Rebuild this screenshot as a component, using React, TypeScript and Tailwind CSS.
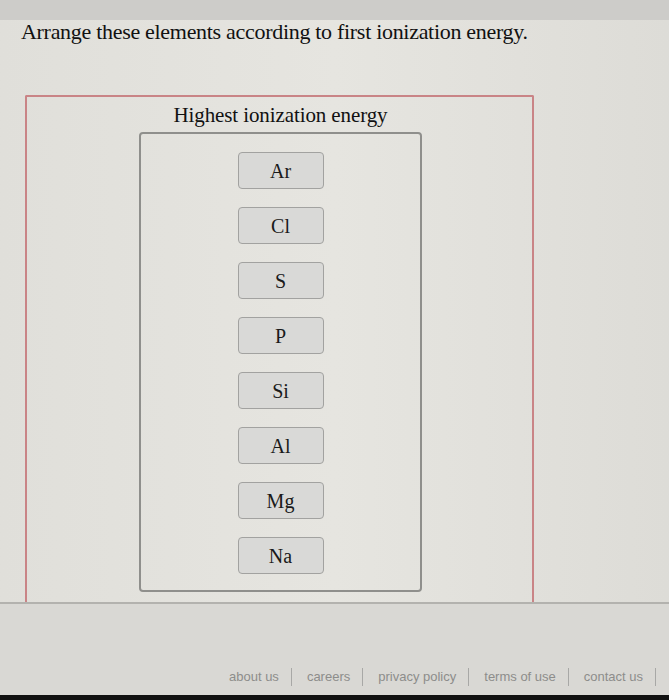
const ELEMENTS = ['Ar', 'Cl', 'S', 'P', 'Si', 'Al', 'Mg', 'Na'];
const LINKS = ['about us', 'careers', 'privacy policy', 'terms of use', 'contact us'];

export default function App() {
  return (
    <div className="w-[669px] h-[700px] overflow-hidden flex flex-col bg-[#e3e2dd]" style={{ fontFamily: '"Liberation Serif", "Times New Roman", serif' }}>
      <div className="h-[20px] bg-[#cdccc9] shrink-0" />
      <div className="h-[584px] shrink-0 flex flex-col border-b-2 border-[#b3b2ae] bg-gradient-to-r from-[#e0dfda] via-[#e6e5e0] to-[#dddcd7]">
        <h1 className="pl-[21px] pt-[0px] text-[22px] leading-[24px] tracking-[-0.3px] text-[#111]">
          Arrange these elements according to first ionization energy.
        </h1>
        <div className="ml-[25px] mt-[51px] w-[509px] flex-1 border-t-2 border-x-2 border-[#c98486] rounded-t-[2px] pl-[112px] pt-[6px]">
          <div className="w-[283px] text-center text-[21px] leading-[24px] tracking-[-0.1px] text-[#111]">Highest ionization energy</div>
          <div className="mt-[5px] w-[283px] h-[460px] border-2 border-[#8f8f8c] rounded-[4px] flex flex-col items-center pt-[18px] gap-[18px]">
            {ELEMENTS.map((el) => (
              <div
                key={el}
                className="w-[86px] h-[37px] shrink-0 flex items-center justify-center bg-[#d9d9d7] border border-[#a2a2a0] rounded-[4px] text-[20px] text-[#1a1a1a]"
              >
                {el}
              </div>
            ))}
          </div>
        </div>
      </div>
      <div className="flex-1 bg-[#d9d8d4] flex items-end pb-[9px] pl-[229px]" style={{ fontFamily: '"Liberation Sans", Arial, sans-serif' }}>
        {LINKS.map((l) => (
          <div key={l} className="shrink-0 flex items-center whitespace-nowrap text-[13px] leading-[16px] text-[#8d8d8b]">
            <span>{l}</span>
            <span className="ml-[12px] mr-[15px] w-px h-[18px] bg-[#a8a8a6]" />
          </div>
        ))}
      </div>
      <div className="h-[5px] bg-[#111] shrink-0" />
    </div>
  );
}
